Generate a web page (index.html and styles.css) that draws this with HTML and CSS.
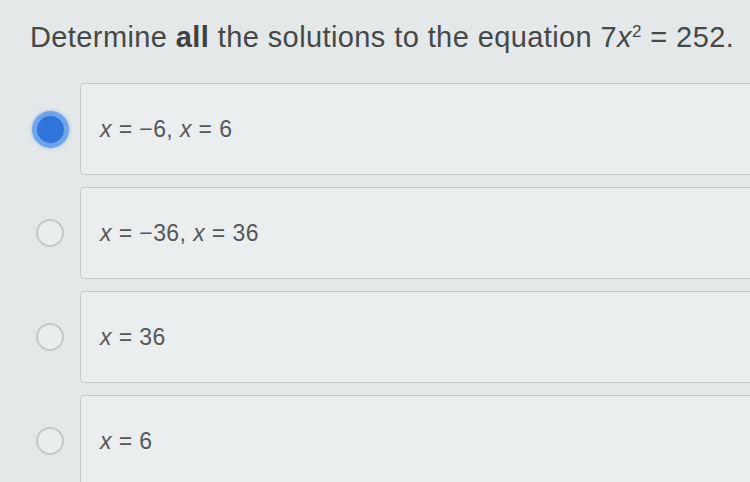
FILE: index.html
```html
<!DOCTYPE html>
<html lang="en">
<head>
<meta charset="utf-8">
<title>Question</title>
<link rel="stylesheet" href="styles.css">
</head>
<body>
<main class="page">
  <h1 class="question">Determine <b>all</b> the solutions to the equation 7<i>x</i><sup>2</sup> = 252.</h1>
  <ul class="options">
    <li class="option">
      <span class="radio-slot"><span class="radio selected"></span></span>
      <div class="card"><span class="answer"><i>x</i> = −6, <i>x</i> = 6</span></div>
    </li>
    <li class="option">
      <span class="radio-slot"><span class="radio"></span></span>
      <div class="card"><span class="answer"><i>x</i> = −36, <i>x</i> = 36</span></div>
    </li>
    <li class="option">
      <span class="radio-slot"><span class="radio"></span></span>
      <div class="card"><span class="answer"><i>x</i> = 36</span></div>
    </li>
    <li class="option">
      <span class="radio-slot"><span class="radio"></span></span>
      <div class="card"><span class="answer"><i>x</i> = 6</span></div>
    </li>
  </ul>
</main>
</body>
</html>
```

FILE: styles.css
```css
html, body {
  margin: 0;
  padding: 0;
  width: 750px;
  height: 482px;
  overflow: hidden;
  background: #e4e8e8;
  font-family: "Liberation Sans", Arial, sans-serif;
}

.page {
  padding: 21px 0 0 30px;
}

.question {
  margin: 0;
  font-size: 29px;
  font-weight: normal;
  line-height: 32px;
  color: #454849;
  letter-spacing: 0.4px;
  white-space: nowrap;
}

.question b {
  font-weight: bold;
  color: #3e4142;
}

.question i {
  font-style: italic;
}

.question sup {
  font-size: 17px;
  line-height: 0;
  vertical-align: 10px;
}

.options {
  list-style: none;
  margin: 30px 0 0 0;
  padding: 0;
  display: flex;
  flex-direction: column;
  gap: 12px;
}

.option {
  display: flex;
  align-items: center;
}

.radio-slot {
  flex: 0 0 40px;
  width: 40px;
  height: 40px;
  margin-right: 10px;
  display: flex;
  align-items: center;
  justify-content: center;
}

.radio {
  width: 28px;
  height: 28px;
  box-sizing: border-box;
  border-radius: 50%;
  border: 2.5px solid #c5cac9;
  background: #e9eded;
}

.radio.selected {
  width: 27px;
  height: 27px;
  border: none;
  background: #2e74da;
  box-shadow: 0 0 0 5px #6ea4ea, 0 0 3px 6px rgba(120, 170, 235, 0.45);
}

.card {
  flex: 1;
  height: 92px;
  margin-right: -30px;
  box-sizing: border-box;
  border: 1px solid #c4caca;
  border-radius: 4px;
  background: #ebeeee;
  display: flex;
  align-items: center;
  padding-left: 19px;
}

.answer {
  font-size: 23px;
  color: #555859;
  letter-spacing: 0.4px;
  white-space: nowrap;
}

.answer i {
  font-style: italic;
}
```
